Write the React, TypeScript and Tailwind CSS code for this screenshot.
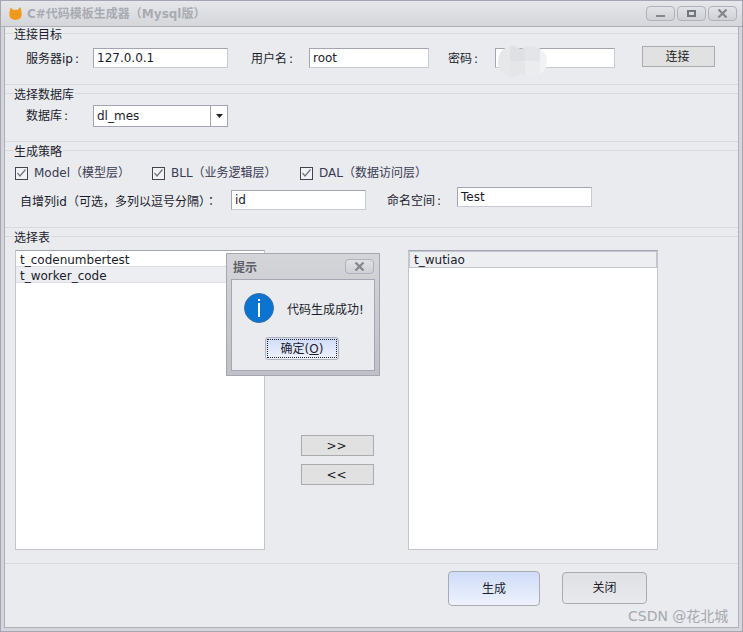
import React from 'react';

const cjk = "font-['DejaVu_Sans','Noto_Sans_CJK_SC',sans-serif]";

const Colon: React.FC = () => <span className="font-['Noto_Sans_CJK_TC']">：</span>;

const NarrowColon: React.FC = () => <span className="ml-[2px]">:</span>;

const GroupBox: React.FC<{ title: string; className: string; children?: React.ReactNode }> = ({ title, className, children }) => {
  return (
    <div className={`border-b border-[#d8dadd] ${className}`}>
      <div className="flex items-center h-[16px]">
        <div className="w-[8px] h-px bg-[#d8dadd]" />
        <span className="px-[1px] pt-[4px] leading-[14px]">{title}</span>
        <div className="flex-1 h-px bg-[#d8dadd]" />
      </div>
      {children}
    </div>
  );
};

const TextInput: React.FC<{ value?: string; className: string }> = ({ value, className }) => {
  return (
    <div className={`h-[20px] bg-white border border-[#c9cbd3] border-t-[#a4a5b4] border-l-[#a4a5b4] pl-[3px] leading-[19px] text-[#1c1c2c] ${className}`}>
      {value}
    </div>
  );
};

const Check: React.FC<{ label: string; className: string }> = ({ label, className }) => {
  return (
    <div className={`flex items-center h-[14px] ${className}`}>
      <div className="w-[13px] h-[13px] border border-[#444450] bg-[#f1f2f5] flex items-center justify-center mr-[6px]">
        <svg width="9" height="8" viewBox="0 0 9 8" fill="none">
          <path d="M0.5 4l2.5 3l5.5-6.5" stroke="#70747c" strokeWidth="1.2" />
        </svg>
      </div>
      <span className="text-[#3a3a52] leading-[14px]">{label}</span>
    </div>
  );
};

const FlatButton: React.FC<{ label: string; className: string }> = ({ label, className }) => {
  return (
    <div className={`bg-[#e1e1e1] border border-[#ababab] flex items-center justify-center text-[#222] ${className}`}>
      {label}
    </div>
  );
};

const CloseIcon: React.FC = () => (
  <svg width="11" height="9" viewBox="0 0 11 9" fill="none">
    <path d="M1.5 0.5l8 8M9.5 0.5l-8 8" stroke="#84868e" strokeWidth="2.2" />
  </svg>
);

const CaptionButton: React.FC<{ children: React.ReactNode }> = ({ children }) => (
  <div className="w-[29px] h-[15px] rounded-[4px] border border-[#b0b1ba] bg-gradient-to-b from-[#e2e3e6] to-[#d0d1d6] flex items-center justify-center">
    {children}
  </div>
);

export default function App() {
  return (
    <div className={`relative w-[743px] h-[632px] overflow-hidden bg-[#d5d6da] border border-[#a5a6b4] text-[12px] text-[#1c1c2c] ${cjk}`}>
      <div className="h-[26px] flex items-center bg-gradient-to-b from-[#e6e7ea] to-[#d5d6da] border-b border-[#aeafb9] pl-[7px] pr-[5px]">
        <svg width="15" height="15" viewBox="0 0 15 15" className="mr-[4px]">
          <path d="M1.5 6L2.5 1.5L5.5 4Q7.5 3.5 9.5 4L12.5 1L13.5 6Q15 13.5 7.5 14Q0 13.5 1.5 6Z" fill="#f09a1c" />
          <circle cx="5" cy="8.5" r="0.7" fill="#d98a14" />
          <circle cx="9.5" cy="8.5" r="0.7" fill="#d98a14" />
        </svg>
        <span className="font-bold text-[#a9abb3] text-[12px] pt-[1px]">C#代码模板生成器（Mysql版）</span>
        <div className="ml-auto flex gap-[2px]">
          <CaptionButton>
            <div className="w-[9px] h-[2px] bg-[#84868e] mt-[5px]" />
          </CaptionButton>
          <CaptionButton>
            <div className="w-[9px] h-[7px] border-2 border-[#74767e]" />
          </CaptionButton>
          <CaptionButton>
            <CloseIcon />
          </CaptionButton>
        </div>
      </div>

      <div className="h-[601px] mx-[3px] border-x border-b border-[#aeafb9] bg-[#e9ebef] flex flex-col">
        <GroupBox title="连接目标" className="-mt-[2px] h-[60px] flex-none">
          <div className="flex items-start pt-[7px]">
            <span className="ml-[21px] w-[67px] leading-[22px]">服务器ip<NarrowColon /></span>
            <TextInput value="127.0.0.1" className="w-[135px]" />
            <span className="ml-[23px] w-[58px] leading-[22px]">用户名<NarrowColon /></span>
            <TextInput value="root" className="w-[120px]" />
            <span className="ml-[19px] w-[47px] leading-[22px]">密码<NarrowColon /></span>
            <TextInput className="w-[120px]" />
            <FlatButton label="连接" className="ml-[27px] w-[73px] h-[21px] -mt-[2px] pr-[2px]" />
          </div>
        </GroupBox>

        <GroupBox title="选择数据库" className="h-[57px] flex-none">
          <div className="flex items-center pt-[4px]">
            <span className="ml-[21px] w-[67px]">数据库<NarrowColon /></span>
            <div className="w-[135px] h-[22px] bg-white border border-[#a4a5b4] flex items-center">
              <span className="flex-1 pl-[3px]">dl_mes</span>
              <div className="w-[17px] h-full border-l border-[#a4a5b4] flex items-center justify-center">
                <svg width="7" height="4" viewBox="0 0 7 4">
                  <path d="M0 0h7L3.5 4Z" fill="#222" />
                </svg>
              </div>
            </div>
          </div>
        </GroupBox>

        <GroupBox title="生成策略" className="h-[86px] flex-none">
          <div className="flex items-center pt-[8px] pl-[10px]">
            <Check label="Model（模型层）" className="w-[137px]" />
            <Check label="BLL（业务逻辑层）" className="w-[148px]" />
            <Check label="DAL（数据访问层）" className="w-[150px]" />
          </div>
          <div className="flex items-start pt-[10px]">
            <span className="ml-[15px] w-[211px] leading-[22px]">自增列id（可选，多列以逗号分隔）<Colon /></span>
            <TextInput value="id" className="w-[135px]" />
            <span className="ml-[21px] w-[70px] leading-[22px]">命名空间<NarrowColon /></span>
            <TextInput value="Test" className="w-[135px] -mt-[3px]" />
          </div>
        </GroupBox>

        <GroupBox title="选择表" className="flex-none h-[336px]">
          <div className="flex pt-[6px] pl-[10px]">
            <div className="w-[250px] h-[300px] bg-white border border-[#c4c5cd] border-t-[#a4a5b4]">
              <div className="h-[16px] leading-[18px] pl-[4px] border-b border-[#dcdde2]">t_codenumbertest</div>
              <div className="h-[16px] leading-[18px] pl-[4px] bg-[#eceef1] border-b border-[#dcdde2]">t_worker_code</div>
            </div>
            <div className="ml-[36px] w-[73px] flex flex-col gap-[8px] pt-[185px]">
              <FlatButton label=">>" className="h-[21px] pr-[2px]" />
              <FlatButton label="<<" className="h-[21px] pr-[2px]" />
            </div>
            <div className="ml-[34px] w-[250px] h-[300px] bg-white border border-[#c4c5cd] border-t-[#a4a5b4]">
              <div className="h-[17px] leading-[16px] pl-[4px] bg-[#eceef1] border border-[#c4c5cd]">t_wutiao</div>
            </div>
          </div>
        </GroupBox>

        <div className="flex items-start pt-[7px] pl-[443px]">
          <div className="w-[92px] h-[35px] rounded-[4px] border border-[#a9aab4] bg-gradient-to-b from-[#cfdcf8] to-[#eef2fd] flex items-center justify-center">生成</div>
          <div className="ml-[22px] mt-[1px] w-[85px] h-[32px] rounded-[4px] border border-[#a9aab4] bg-gradient-to-b from-[#dfe0e4] to-[#e9eaee] flex items-center justify-center">关闭</div>
        </div>
      </div>

      {/* blurred-out password */}
      <svg width="49" height="31" viewBox="0 0 49 31" className="absolute left-[497px] top-[45px]">
        <defs>
          <clipPath id="smudge">
            <ellipse cx="14" cy="15.5" rx="14" ry="15.5" />
            <ellipse cx="33" cy="15.5" rx="16" ry="15.5" />
          </clipPath>
        </defs>
        <g clipPath="url(#smudge)">
          <rect x="0" y="0" width="12" height="31" fill="#e7e8ea" />
          <rect x="12" y="0" width="15" height="15" fill="#dfe0e3" />
          <rect x="12" y="15" width="15" height="16" fill="#e5e6e8" />
          <rect x="27" y="0" width="15" height="15" fill="#e4e5e8" />
          <rect x="27" y="15" width="15" height="16" fill="#ebecee" />
          <rect x="42" y="0" width="7" height="31" fill="#f1f2f3" />
        </g>
      </svg>

      {/* message box */}
      <div className="absolute left-[225px] top-[252px] w-[154px] h-[123px] border border-[#a5a6b2] bg-gradient-to-b from-[#d4d5d9] to-[#c0c1c7] px-[4px] pb-[4px] flex flex-col">
        <div className="h-[25px] flex items-center justify-between pl-[2px] pr-[1px]">
          <span className="font-bold text-[#5c5e68] pt-[2px]">提示</span>
          <div className="w-[29px] h-[15px] rounded-[4px] border border-[#b0b1ba] bg-gradient-to-b from-[#e0e1e4] to-[#cfd0d5] flex items-center justify-center">
            <CloseIcon />
          </div>
        </div>
        <div className="flex-1 bg-[#e9ebef] border border-[#a5a6b2] flex flex-col">
          <div className="flex items-center pt-[13px] pl-[12px] w-full">
            <div className="w-[30px] h-[30px] rounded-full bg-[#0a74d0] border border-[#3a6fa5] flex flex-col items-center justify-center gap-[2px] mr-[13px]">
              <div className="w-[2px] h-[2px] bg-white" />
              <div className="w-[2px] h-[14px] bg-white" />
            </div>
            <span className="pt-[3px]">代码生成成功!</span>
          </div>
          <div className="mt-[14px] ml-[33px] w-[74px] h-[23px] rounded-[3px] border border-[#b0b1bb] bg-gradient-to-b from-[#cfdcf8] to-[#eef2fd] p-[1px]">
            <div className="w-full h-full border border-dotted border-[#222] flex items-center justify-center">确定(<span className="underline">O</span>)</div>
          </div>
        </div>
      </div>

      <div className="absolute left-[627px] top-[605px] text-[14px] text-[#a6a8ae]">CSDN @花北城</div>
    </div>
  );
}
